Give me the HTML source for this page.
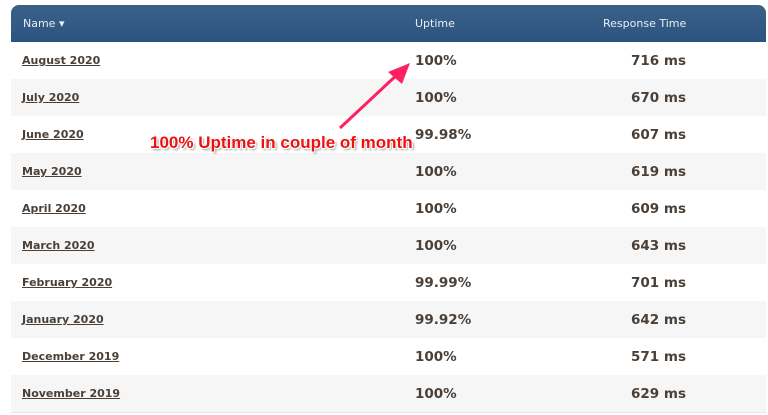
<!DOCTYPE html>
<html><head><style>
body{margin:0;width:768px;height:415px;background:#fff;font-family:"DejaVu Sans","Liberation Sans",sans-serif;position:relative;overflow:hidden}
.hd{position:absolute;left:11px;top:5px;width:755px;height:37px;background:linear-gradient(#3b6188,#2b5480);border-radius:8px 8px 0 0;color:#e8eef5;font-size:11px}
.hd span{position:absolute;top:12px}
.row{position:absolute;left:11px;width:755px;height:37px;border-bottom:1px solid #e6e6e6;color:#4a4038;font-weight:bold;font-size:13.5px}
.row span{position:absolute;top:11px}
.n{left:11px;text-decoration:underline;font-size:11px;top:12px!important}
.u{left:404px}
.r{right:80px}
</style></head><body>
<div class="hd"><span style="left:12px">Name ▾</span><span style="left:404px">Uptime</span><span style="left:592px">Response Time</span></div>
<div class="row" style="top:42px;background:#fff"><span class="n">August 2020</span><span class="u">100%</span><span class="r">716 ms</span></div>
<div class="row" style="top:79px;background:#f6f6f6"><span class="n">July 2020</span><span class="u">100%</span><span class="r">670 ms</span></div>
<div class="row" style="top:116px;background:#fff"><span class="n">June 2020</span><span class="u">99.98%</span><span class="r">607 ms</span></div>
<div class="row" style="top:153px;background:#f6f6f6"><span class="n">May 2020</span><span class="u">100%</span><span class="r">619 ms</span></div>
<div class="row" style="top:190px;background:#fff"><span class="n">April 2020</span><span class="u">100%</span><span class="r">609 ms</span></div>
<div class="row" style="top:227px;background:#f6f6f6"><span class="n">March 2020</span><span class="u">100%</span><span class="r">643 ms</span></div>
<div class="row" style="top:264px;background:#fff"><span class="n">February 2020</span><span class="u">99.99%</span><span class="r">701 ms</span></div>
<div class="row" style="top:301px;background:#f6f6f6"><span class="n">January 2020</span><span class="u">99.92%</span><span class="r">642 ms</span></div>
<div class="row" style="top:338px;background:#fff"><span class="n">December 2019</span><span class="u">100%</span><span class="r">571 ms</span></div>
<div class="row" style="top:375px;background:#f6f6f6"><span class="n">November 2019</span><span class="u">100%</span><span class="r">629 ms</span></div>
<svg style="position:absolute;left:0;top:0" width="768" height="415">
<line x1="340" y1="128" x2="400" y2="72" stroke="#ff2060" stroke-width="3"/>
<polygon points="410,63 388,72 402,84" fill="#ff2060"/>
</svg>
<div style="position:absolute;left:150px;top:133px;color:#ee1111;font-family:'Liberation Sans',sans-serif;font-weight:bold;font-size:17px;text-shadow:1px 1px 0 #fff,-1px -1px 0 #fff,1px -1px 0 #fff,-1px 1px 0 #fff,2px 2px 2px #999">100% Uptime in couple of month</div>
</body></html>
